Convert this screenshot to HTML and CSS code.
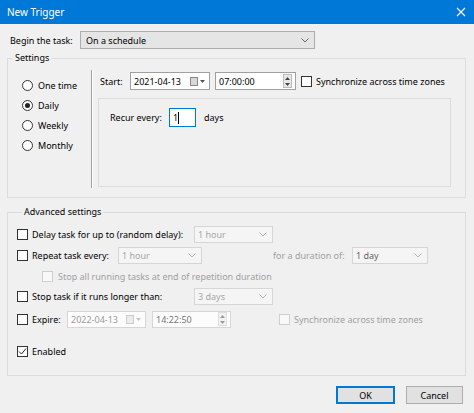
FILE: index.html
```html
<!DOCTYPE html>
<html lang="en">
  <head>
    <meta charset="UTF-8" />
    <title>New Trigger</title>
    <link rel="stylesheet" href="styles.css">
  </head>
  <body>
    <div class="titlebar">
      <span class="title">New Trigger</span>
      <svg class="close" width="10" height="10" viewBox="0 0 10 10">
        <path d="M1 1L9 9M9 1L1 9" stroke="#fff" stroke-width="1.1" fill="none" />
      </svg>
    </div>
    <div class="content">
      <div class="begin">
        <span class="begin-label">Begin the task:</span>
        <div class="combo combo-begin">
          <span>On a schedule</span>
          <svg width="8" height="5" viewBox="0 0 8 5"><path d="M0.5 0.5L4 4L7.5 0.5" stroke="#666" fill="none" /></svg>
        </div>
      </div>

      <fieldset class="group settings">
        <legend>Settings</legend>
        <div class="settings-inner">
          <div class="radios">
            <div class="radio-row"><span class="radio"></span>One time</div>
            <div class="radio-row"><span class="radio checked"></span>Daily</div>
            <div class="radio-row"><span class="radio"></span>Weekly</div>
            <div class="radio-row"><span class="radio"></span>Monthly</div>
          </div>
          <div class="vsep"></div>
          <div class="schedule">
            <div class="start-row">
              <span class="start-label">Start:</span>
              <div class="field date">
                <span class="field-text">2021-04-13</span>
                <span class="cal"></span>
                <svg width="5" height="3" viewBox="0 0 5 3"><path d="M0 0H5L2.5 3Z" fill="#555" /></svg>
              </div>
              <div class="field time">
                <span class="field-text">07:00:00</span>
                <div class="spin">
                  <svg width="5" height="3" viewBox="0 0 5 3"><path d="M0 3H5L2.5 0Z" fill="#444" /></svg>
                  <svg width="5" height="3" viewBox="0 0 5 3"><path d="M0 0H5L2.5 3Z" fill="#444" /></svg>
                </div>
              </div>
              <span class="check"></span>
              <span class="check-label">Synchronize across time zones</span>
            </div>
            <div class="recur-panel">
              <div class="recur-row">
                <span class="recur-label">Recur every:</span>
                <div class="num-input">1<span class="caret"></span></div>
                <span class="days">days</span>
              </div>
            </div>
          </div>
        </div>
      </fieldset>

      <fieldset class="group advanced">
        <legend>Advanced settings</legend>
        <div class="adv-rows">
          <div class="adv-row">
            <span class="check"></span>
            <span class="adv-label w-delay">Delay task for up to (random delay):</span>
            <div class="combo combo-off w-79">
              <span>1 hour</span>
              <svg width="8" height="5" viewBox="0 0 8 5"><path d="M0.5 0.5L4 4L7.5 0.5" stroke="#b5b5b5" fill="none" /></svg>
            </div>
          </div>
          <div class="adv-row">
            <span class="check"></span>
            <span class="adv-label w-repeat">Repeat task every:</span>
            <div class="combo combo-off w-84">
              <span>1 hour</span>
              <svg width="8" height="5" viewBox="0 0 8 5"><path d="M0.5 0.5L4 4L7.5 0.5" stroke="#b5b5b5" fill="none" /></svg>
            </div>
            <span class="muted duration-label">for a duration of:</span>
            <div class="combo combo-off w-76">
              <span class="dark">1 day</span>
              <svg width="8" height="5" viewBox="0 0 8 5"><path d="M0.5 0.5L4 4L7.5 0.5" stroke="#b5b5b5" fill="none" /></svg>
            </div>
          </div>
          <div class="adv-row indent">
            <span class="check off"></span>
            <span class="muted">Stop all running tasks at end of repetition duration</span>
          </div>
          <div class="adv-row">
            <span class="check"></span>
            <span class="adv-label w-delay">Stop task if it runs longer than:</span>
            <div class="combo combo-off w-79">
              <span>3 days</span>
              <svg width="8" height="5" viewBox="0 0 8 5"><path d="M0.5 0.5L4 4L7.5 0.5" stroke="#b5b5b5" fill="none" /></svg>
            </div>
          </div>
          <div class="adv-row expire-row">
            <span class="check"></span>
            <span class="adv-label w-expire">Expire:</span>
            <div class="field field-off date">
              <span class="field-text">2022-04-13</span>
              <span class="cal off"></span>
              <svg width="5" height="3" viewBox="0 0 5 3"><path d="M0 0H5L2.5 3Z" fill="#c4c4c4" /></svg>
            </div>
            <div class="field field-off time2">
              <span class="field-text">14:22:50</span>
              <div class="spin off">
                <svg width="5" height="3" viewBox="0 0 5 3"><path d="M0 3H5L2.5 0Z" fill="#999" /></svg>
                <svg width="5" height="3" viewBox="0 0 5 3"><path d="M0 0H5L2.5 3Z" fill="#999" /></svg>
              </div>
            </div>
            <span class="check off sync-off"></span>
            <span class="muted">Synchronize across time zones</span>
          </div>
          <div class="adv-row enabled-row">
            <span class="check">
              <svg width="9" height="9" viewBox="0 0 9 9"><path d="M1 4.5L3.5 7L8 1.5" stroke="#222" stroke-width="1" fill="none" /></svg>
            </span>
            <span class="adv-label">Enabled</span>
          </div>
        </div>
      </fieldset>

      <div class="buttons">
        <button class="btn btn-ok">OK</button>
        <button class="btn">Cancel</button>
      </div>
    </div>
  </body>
</html>
```

FILE: styles.css
```css
* {
  margin: 0;
  padding: 0;
  box-sizing: border-box;
}
body {
  width: 474px;
  height: 413px;
  overflow: hidden;
  background: #f0f0f0;
  font-family: "Noto Sans", "Open Sans", sans-serif;
  font-size: 9px;
  color: #000;
  white-space: nowrap;
}
.titlebar {
  height: 24px;
  background: #0078d7;
  color: #fff;
  font-size: 10px;
  display: flex;
  align-items: center;
  justify-content: space-between;
  padding: 0 8px 0 7px;
}
.content {
  padding: 7px 8px 0 7px;
}

/* begin the task */
.begin {
  display: flex;
  align-items: center;
  height: 18px;
}
.begin-label {
  width: 73px;
  padding-left: 3px;
}
.combo {
  display: flex;
  align-items: center;
  justify-content: space-between;
  flex-shrink: 0;
  height: 18px;
  border: 1px solid #adadad;
  background: #e5e5e5;
  padding: 0 5px 0 5px;
}
.combo-begin {
  width: 235px;
}
.combo-off {
  height: 17px;
  border-color: #d6d6d6;
  background: #f5f5f5;
  color: #a6a6a6;
  padding-left: 3px;
}
.combo-off .dark {
  color: #666;
}
.w-79 { width: 79px; }
.w-84 { width: 84px; }
.w-76 { width: 76px; }

/* group boxes */
.group {
  border: 1px solid #dcdcdc;
  margin: 0;
  min-width: 0;
  padding: 0;
}
.group legend {
  margin-left: 5px;
  padding: 0 2px;
  line-height: 14px;
}
.settings {
  margin-top: 2px;
  padding: 5px 0 9px 0;
}
.settings-inner {
  display: flex;
}
.radios {
  width: 83px;
  padding: 5px 0 0 14px;
}
.radio-row {
  height: 20px;
  display: flex;
  align-items: center;
  gap: 5px;
}
.radio {
  width: 11px;
  height: 11px;
  border: 1px solid #333;
  border-radius: 50%;
  background: #fff;
  display: flex;
  align-items: center;
  justify-content: center;
}
.radio.checked::after {
  content: "";
  width: 5px;
  height: 5px;
  border-radius: 50%;
  background: #222;
}
.vsep {
  width: 2px;
  height: 118px;
  border-left: 1px solid #a0a0a0;
  border-right: 1px solid #fff;
}
.schedule {
  margin-left: 5px;
  padding-top: 2px;
}
.start-row {
  display: flex;
  align-items: center;
  height: 18px;
}
.start-label {
  width: 32px;
  padding-left: 2px;
}
.field {
  height: 18px;
  border: 1px solid #a0a0a0;
  background: #fff;
  display: flex;
  align-items: center;
  flex-shrink: 0;
  padding-left: 3px;
}
.field-text {
  flex: 1;
}
.date {
  width: 80px;
  margin-right: 5px;
  padding-right: 4px;
}
.time {
  width: 81px;
  margin-right: 5px;
  padding-right: 3px;
}
.cal {
  width: 8px;
  height: 9px;
  border: 1px solid #888;
  background: #d8d8d8;
  margin-right: 2px;
}
.cal.off {
  border-color: #ccc;
  background: #ececec;
}
.spin {
  width: 9px;
  height: 14px;
  border: 1px solid #bbb;
  background: #e8e8e8;
  display: flex;
  flex-direction: column;
  align-items: center;
  justify-content: space-around;
}
.spin.off {
  background: #f2f2f2;
  border-color: #ddd;
}
.check {
  width: 11px;
  height: 11px;
  border: 1px solid #333;
  background: #fff;
  flex-shrink: 0;
  display: flex;
  align-items: center;
  justify-content: center;
}
.check.off {
  border-color: #cfcfcf;
  background: #f8f8f8;
}
.check-label {
  margin-left: 4px;
}
.recur-panel {
  margin-top: 8px;
  width: 353px;
  height: 89px;
  border: 1px solid #dcdcdc;
  padding: 9px 0 0 11px;
}
.recur-row {
  display: flex;
  align-items: center;
  height: 19px;
}
.recur-label {
  width: 59px;
}
.num-input {
  width: 27px;
  height: 19px;
  border: 1px solid #0078d7;
  background: #fff;
  display: flex;
  align-items: center;
  padding-left: 3px;
}
.caret {
  width: 1px;
  height: 12px;
  background: #000;
}
.days {
  margin-left: 8px;
}

/* advanced */
.advanced {
  margin-top: 7px;
  padding: 5px 0 14px 9px;
}
.adv-row {
  display: flex;
  align-items: center;
  height: 21px;
}
.adv-row .check + span {
  margin-left: 4px;
}
.adv-row.indent {
  height: 20px;
  padding-left: 25px;
}
.adv-row.indent .check + span {
  margin-left: 5px;
}
.adv-label {
  flex-shrink: 0;
}
.adv-label.w-delay { width: 162px; }
.adv-label.w-repeat { width: 86px; }
.adv-label.w-expire { width: 35px; }
.muted {
  color: #a0a0a0;
}
.duration-label {
  margin-left: 71px;
  width: 79px;
}
.expire-row {
  height: 22px;
  margin-top: 1px;
}
.field-off {
  height: 17px;
  border-color: #d6d6d6;
  background: #fcfcfc;
  color: #9a9a9a;
}
.expire-row .date {
  width: 79px;
  margin-right: 6px;
}
.time2 {
  width: 79px;
  padding-right: 3px;
  color: #777;
}
.sync-off {
  margin-left: 48px;
}
.enabled-row {
  margin-top: 11px;
  height: 20px;
}

/* buttons */
.buttons {
  display: flex;
  justify-content: flex-end;
  gap: 11px;
  margin-top: 10px;
  padding-right: 3px;
}
.btn {
  width: 57px;
  height: 18px;
  border: 1px solid #adadad;
  background: #e1e1e1;
  font-family: inherit;
  font-size: 9px;
  color: #000;
}
.btn-ok {
  width: 59px;
  border: 2px solid #0078d7;
}
```
